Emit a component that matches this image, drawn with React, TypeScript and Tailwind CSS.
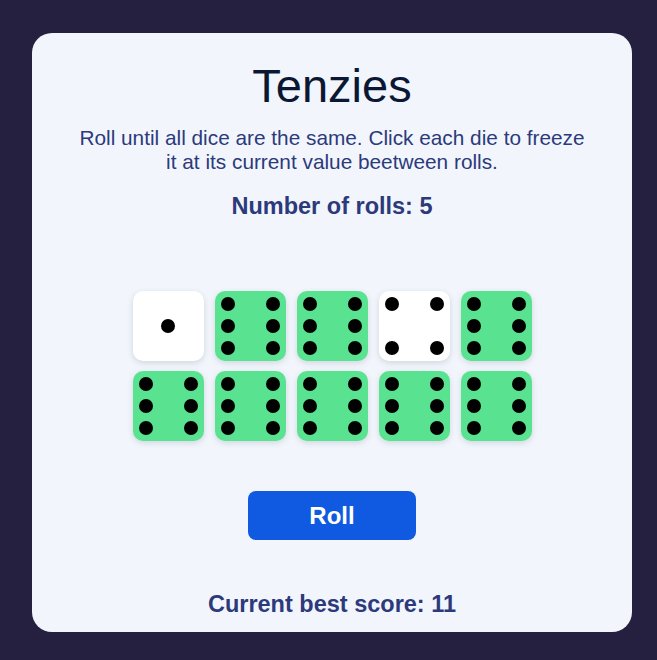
import React, { useState } from "react";

type Die = { value: number; held: boolean };

const initialDice: Die[] = [
  { value: 1, held: false },
  { value: 6, held: true },
  { value: 6, held: true },
  { value: 4, held: false },
  { value: 6, held: true },
  { value: 6, held: true },
  { value: 6, held: true },
  { value: 6, held: true },
  { value: 6, held: true },
  { value: 6, held: true },
];

// Pip cell positions on a 3x3 grid (column, row)
const pipCells: Record<number, string[]> = {
  1: ["col-start-2 row-start-2"],
  2: ["col-start-1 row-start-1", "col-start-3 row-start-3"],
  3: ["col-start-1 row-start-1", "col-start-2 row-start-2", "col-start-3 row-start-3"],
  4: ["col-start-1 row-start-1", "col-start-3 row-start-1", "col-start-1 row-start-3", "col-start-3 row-start-3"],
  5: [
    "col-start-1 row-start-1",
    "col-start-3 row-start-1",
    "col-start-2 row-start-2",
    "col-start-1 row-start-3",
    "col-start-3 row-start-3",
  ],
  6: [
    "col-start-1 row-start-1",
    "col-start-3 row-start-1",
    "col-start-1 row-start-2",
    "col-start-3 row-start-2",
    "col-start-1 row-start-3",
    "col-start-3 row-start-3",
  ],
};

function DieFace({ die, onClick }: { die: Die; onClick: () => void }) {
  return (
    <button
      onClick={onClick}
      className={`w-[71px] h-[70px] rounded-[10px] shadow-[0_2px_6px_rgba(20,30,60,0.15)] ${
        die.held ? "bg-[#59e391]" : "bg-white"
      }`}
    >
      <div className="grid h-full w-full grid-cols-[14px_14px_14px] grid-rows-[14px_14px_14px] justify-between content-between p-[6px]">
        {pipCells[die.value].map((cls, i) => (
          <span key={i} className={`${cls} block h-[14px] w-[14px] rounded-full bg-black`} />
        ))}
      </div>
    </button>
  );
}

export default function App() {
  const [dice, setDice] = useState<Die[]>(initialDice);
  const [rolls, setRolls] = useState(5);

  const toggle = (idx: number) =>
    setDice((d) => d.map((x, i) => (i === idx ? { ...x, held: !x.held } : x)));

  const roll = () => {
    setDice((d) => d.map((x) => (x.held ? x : { ...x, value: 1 + Math.floor(Math.random() * 6) })));
    setRolls((r) => r + 1);
  };

  return (
    <div className="min-h-[660px] w-full bg-[#262040] pl-[32px] pt-[33px] font-[family-name:Liberation_Sans,Arial,sans-serif]">
      <main className="flex h-[599px] w-[600px] flex-col items-center rounded-[20px] bg-[#f2f6fc]">
        <h1 className="mt-[29px] text-[47px] leading-[47px] text-[#0b1833]">Tenzies</h1>
        <p className="mt-[17px] w-[512px] text-center text-[20.8px] leading-[24px] text-[#2c3a7b]">
          Roll until all dice are the same. Click each die to freeze it at its current value beetween rolls.
        </p>
        <h2 className="mt-[19px] text-[23.5px] font-bold leading-[26px] text-[#2c3a7b]">
          Number of rolls: {rolls}
        </h2>
        <div className="mt-[72px] grid grid-cols-5 gap-x-[11px] gap-y-[10px]">
          {dice.map((d, i) => (
            <DieFace key={i} die={d} onClick={() => toggle(i)} />
          ))}
        </div>
        <button
          onClick={roll}
          className="mt-[50px] h-[49px] w-[168px] rounded-[8px] bg-[#0f5ae0] text-[24px] font-bold text-white"
        >
          Roll
        </button>
        <h2 className="mt-[51px] text-[23.5px] font-bold leading-[26px] text-[#2c3a7b]">
          Current best score: 11
        </h2>
      </main>
    </div>
  );
}
